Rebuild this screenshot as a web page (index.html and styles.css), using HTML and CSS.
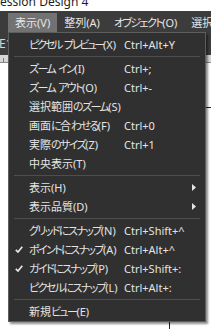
FILE: index.html
```html
<!DOCTYPE html>
<html lang="ja">
<head>
<meta charset="utf-8">
<link rel="stylesheet" href="styles.css">
</head>
<body>
<div class="title"><span>ession Design 4</span></div>
<nav class="menubar">
  <span class="mb-item active">表示(V)</span>
  <span class="mb-item">整列(A)</span>
  <span class="mb-item"><span class="k">オブジェクト</span>(O)</span>
  <span class="mb-item">選択(S)</span>
</nav>
<div class="workspace">
  <div class="toolbar"><span class="tab">E1</span></div>
  <div class="ruler"></div>
  <div class="canvas">
    <div class="line-h"></div>
    <div class="line-v"></div>
  </div>
  <div class="menu">
    <div class="item"><span class="chk"></span><span class="lbl"><span class="k k2">ピクセル</span> <span class="k k2">プレビュー</span>(X)</span><span class="sc">Ctrl+Alt+Y</span><span class="sub"></span></div>
    <div class="sep"></div>
    <div class="item"><span class="chk"></span><span class="lbl"><span class="k">ズーム</span> <span class="k">イン</span>(I)</span><span class="sc">Ctrl+;</span><span class="sub"></span></div>
    <div class="item"><span class="chk"></span><span class="lbl"><span class="k">ズーム</span> <span class="k">アウト</span>(O)</span><span class="sc">Ctrl+-</span><span class="sub"></span></div>
    <div class="item"><span class="chk"></span><span class="lbl">選択範囲<span class="k">のズーム</span>(S)</span><span class="sc"></span><span class="sub"></span></div>
    <div class="item"><span class="chk"></span><span class="lbl">画面<span class="k">に</span>合<span class="k">わせる</span>(F)</span><span class="sc">Ctrl+0</span><span class="sub"></span></div>
    <div class="item"><span class="chk"></span><span class="lbl">実際<span class="k">のサイズ</span>(Z)</span><span class="sc">Ctrl+1</span><span class="sub"></span></div>
    <div class="item"><span class="chk"></span><span class="lbl">中央表示(T)</span><span class="sc"></span><span class="sub"></span></div>
    <div class="sep"></div>
    <div class="item"><span class="chk"></span><span class="lbl">表示(H)</span><span class="sc"></span><span class="sub"><svg width="4" height="7" viewBox="0 0 4 7"><polygon points="0,0 4,3.5 0,7" fill="#e4e4e4"/></svg></span></div>
    <div class="item"><span class="chk"></span><span class="lbl">表示品質(D)</span><span class="sc"></span><span class="sub"><svg width="4" height="7" viewBox="0 0 4 7"><polygon points="0,0 4,3.5 0,7" fill="#e4e4e4"/></svg></span></div>
    <div class="sep"></div>
    <div class="item"><span class="chk"></span><span class="lbl"><span class="k">グリッドにスナップ</span>(N)</span><span class="sc">Ctrl+Shift+^</span><span class="sub"></span></div>
    <div class="item"><span class="chk"><svg width="8" height="7" viewBox="0 0 8 7"><path d="M0.8 3.8 L3 6 L7.3 0.8" fill="none" stroke="#e6e6e6" stroke-width="1.7"/></svg></span><span class="lbl"><span class="k">ポイントにスナップ</span>(A)</span><span class="sc">Ctrl+Alt+^</span><span class="sub"></span></div>
    <div class="item"><span class="chk"><svg width="8" height="7" viewBox="0 0 8 7"><path d="M0.8 3.8 L3 6 L7.3 0.8" fill="none" stroke="#e6e6e6" stroke-width="1.7"/></svg></span><span class="lbl"><span class="k">ガイドにスナップ</span>(P)</span><span class="sc">Ctrl+Shift+:</span><span class="sub"></span></div>
    <div class="item"><span class="chk"></span><span class="lbl"><span class="k">ピクセルにスナップ</span>(L)</span><span class="sc">Ctrl+Alt+:</span><span class="sub"></span></div>
    <div class="sep"></div>
    <div class="item"><span class="chk"></span><span class="lbl">新規<span class="k">ビュー</span>(E)</span><span class="sc"></span><span class="sub"></span></div>
  </div>
</div>
</body>
</html>
```
FILE: styles.css
```css
html, body {
  margin: 0;
  padding: 0;
}
body {
  width: 211px;
  height: 329px;
  overflow: hidden;
  background: #ffffff;
  font-family: "Noto Sans", "Noto Sans CJK JP", sans-serif;
  font-size: 11px;
  display: flex;
  flex-direction: column;
}
.title {
  height: 11px;
  overflow: hidden;
  background: #ffffff;
  color: #1e1e1e;
  flex: none;
}
.title span {
  display: block;
  font-size: 12px;
  line-height: 16px;
  margin-top: -6px;
  white-space: nowrap;
}
.k {
  letter-spacing: -1.6px;
}
.k2 {
  letter-spacing: -2.2px;
}
.menubar {
  height: 22px;
  flex: none;
  background: #3c3c3c;
  display: flex;
  align-items: flex-start;
  padding-left: 8px;
  white-space: nowrap;
  overflow: hidden;
  color: #e6e6e6;
  font-feature-settings: "palt";
}
.mb-item {
  margin-top: 2px;
  height: 19px;
  line-height: 19px;
  padding: 0 7px;
}
.mb-item.active {
  background: #727272;
}
.workspace {
  position: relative;
  flex: 1;
  display: flex;
  flex-direction: column;
}
.toolbar {
  height: 22px;
  flex: none;
  background: #3c3c3c;
  color: #d8d8d8;
  display: flex;
  align-items: flex-end;
}
.tab {
  line-height: 16px;
  padding-bottom: 3px;
  font-size: 12px;
  margin-left: -1px;
}
.ruler {
  height: 7px;
  flex: none;
  background: #d6d6d6 repeating-linear-gradient(90deg, transparent 0 3px, #7a7a7a 3px 4px, transparent 4px 10px);
  background-size: 100% 4px;
  background-repeat: repeat-x;
  background-position: 0 3px;
  border-bottom: 1px solid #8a8a8a;
}
.canvas {
  flex: 1;
  position: relative;
  background: #ffffff;
}
.line-h {
  position: absolute;
  left: 203px;
  top: 44px;
  width: 10px;
  height: 1px;
  background: #222;
}
.line-v {
  position: absolute;
  left: 169px;
  top: 240px;
  width: 1px;
  height: 40px;
  background: #222;
}
.menu {
  position: absolute;
  left: 8px;
  top: -1px;
  width: 198px;
  box-sizing: border-box;
  border: 1px solid #5e5e5e;
  background: #303030;
  padding: 2px 0 0;
  box-shadow: 2px 2px 2px rgba(0, 0, 0, 0.45);
  color: #e4e4e4;
  font-feature-settings: "palt";
}
.item {
  display: grid;
  grid-template-columns: 20px 95px 68px 13px;
  height: 19px;
  line-height: 19px;
  align-items: center;
  white-space: nowrap;
}
.chk {
  display: flex;
  align-items: center;
  padding-left: 6px;
  height: 19px;
}
.sub {
  display: flex;
  align-items: center;
  height: 19px;
}
.sep {
  height: 1px;
  margin: 2px 5px;
  background: #4e4e4e;
}
```
